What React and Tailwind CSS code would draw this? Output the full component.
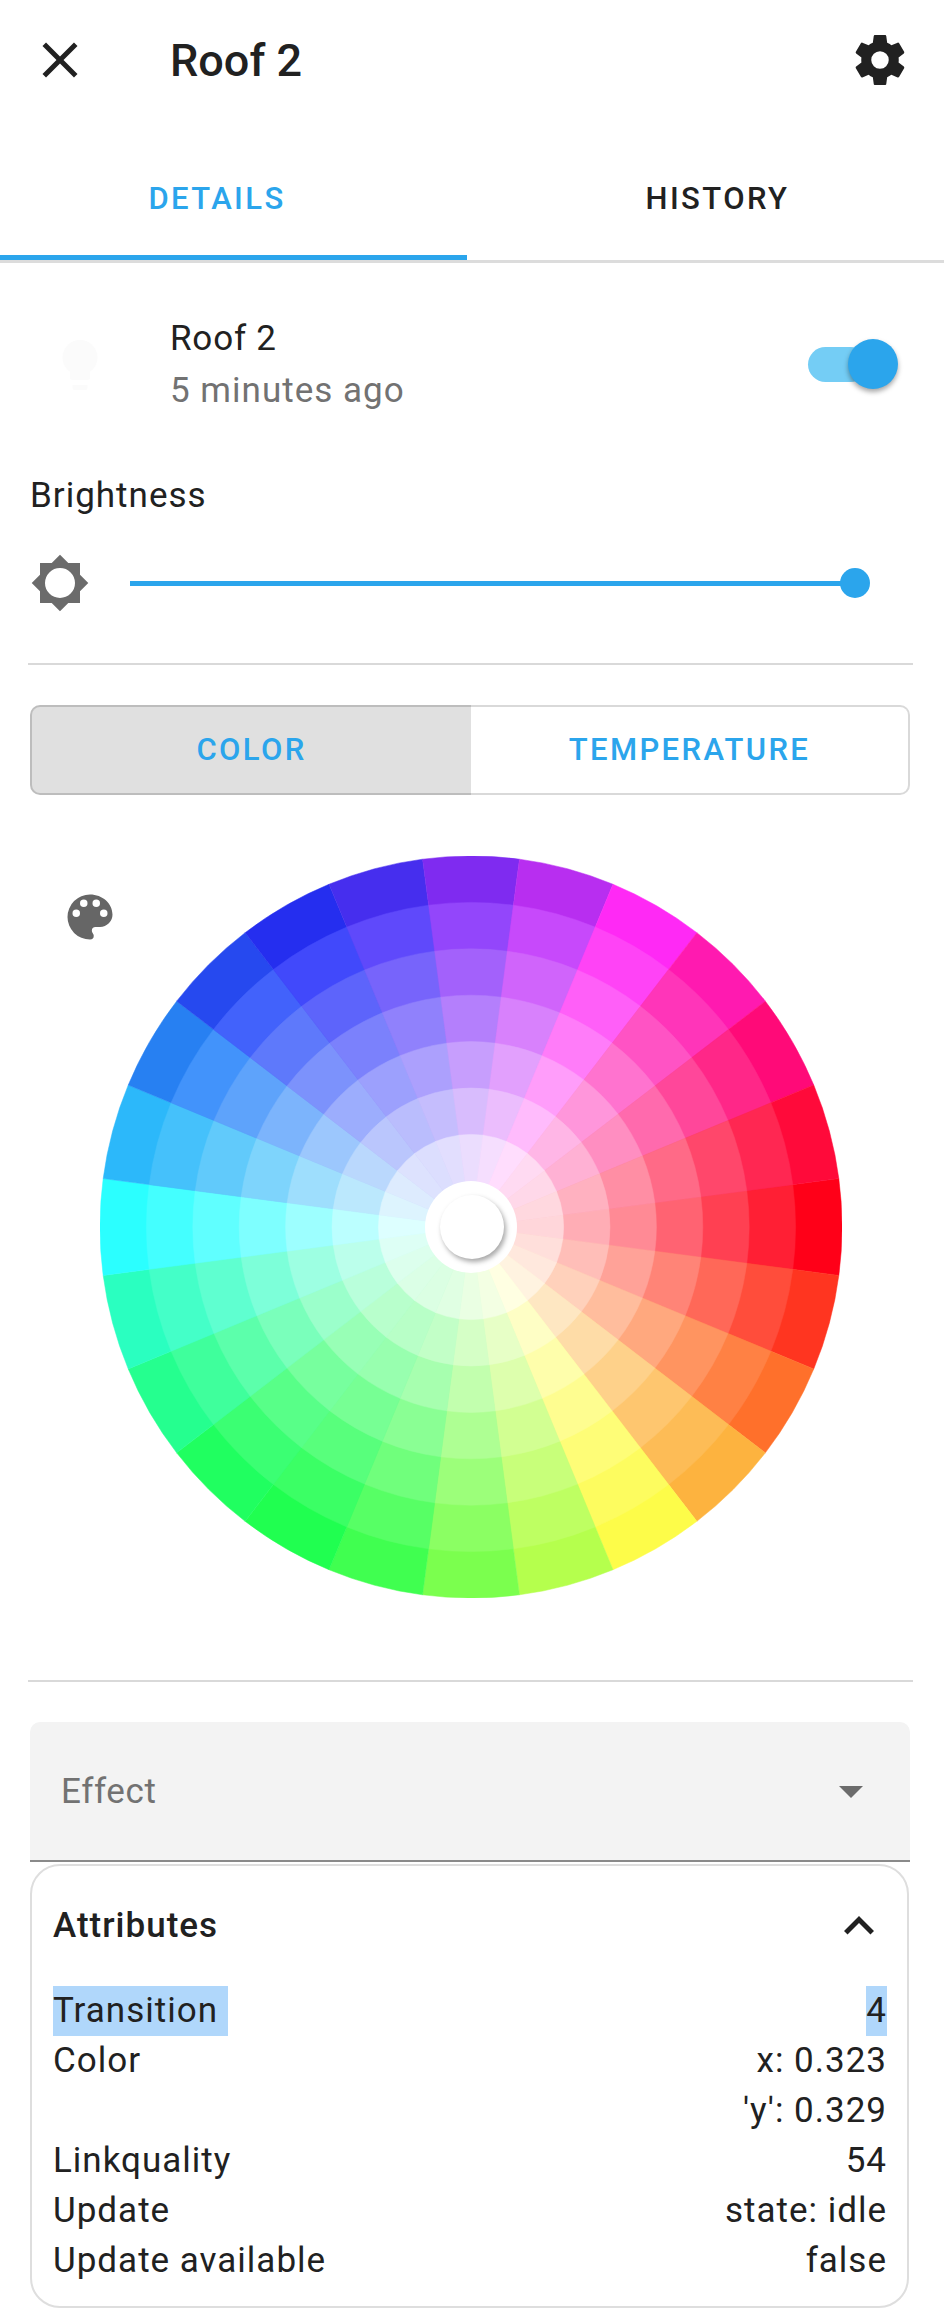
import React from 'react'

const ICONS = {
  close: 'M19,6.41L17.59,5L12,10.59L6.41,5L5,6.41L10.59,12L5,17.59L6.41,19L12,13.41L17.59,19L19,17.59L13.41,12L19,6.41Z',
  cog: 'M12,15.5A3.5,3.5 0 0,1 8.5,12A3.5,3.5 0 0,1 12,8.5A3.5,3.5 0 0,1 15.5,12A3.5,3.5 0 0,1 12,15.5M19.43,12.97C19.47,12.65 19.5,12.33 19.5,12C19.5,11.67 19.47,11.34 19.43,11L21.54,9.37C21.73,9.22 21.78,8.95 21.66,8.73L19.66,5.27C19.54,5.05 19.27,4.96 19.05,5.05L16.56,6.05C16.04,5.66 15.5,5.32 14.87,5.07L14.5,2.42C14.46,2.18 14.25,2 14,2H10C9.75,2 9.54,2.18 9.5,2.42L9.13,5.07C8.5,5.32 7.96,5.66 7.44,6.05L4.95,5.05C4.73,4.96 4.46,5.05 4.34,5.27L2.34,8.73C2.21,8.95 2.27,9.22 2.46,9.37L4.57,11C4.53,11.34 4.5,11.67 4.5,12C4.5,12.33 4.53,12.65 4.57,12.97L2.46,14.63C2.27,14.78 2.21,15.05 2.34,15.27L4.34,18.73C4.46,18.95 4.73,19.03 4.95,18.95L7.44,17.94C7.96,18.34 8.5,18.68 9.13,18.93L9.5,21.58C9.54,21.82 9.75,22 10,22H14C14.25,22 14.46,21.82 14.5,21.58L14.87,18.93C15.5,18.67 16.04,18.34 16.56,17.94L19.05,18.95C19.27,19.03 19.54,18.95 19.66,18.73L21.66,15.27C21.78,15.05 21.73,14.78 21.54,14.63L19.43,12.97Z',
  bulb: 'M12,2A7,7 0 0,0 5,9C5,11.38 6.19,13.47 8,14.74V17A1,1 0 0,0 9,18H15A1,1 0 0,0 16,17V14.74C17.81,13.47 19,11.38 19,9A7,7 0 0,0 12,2M9,21A1,1 0 0,0 10,22H14A1,1 0 0,0 15,21V20H9V21Z',
  sun: 'M12,18A6,6 0 0,1 6,12A6,6 0 0,1 12,6A6,6 0 0,1 18,12A6,6 0 0,1 12,18M20,15.31L23.31,12L20,8.69V4H15.31L12,0.69L8.69,4H4V8.69L0.69,12L4,15.31V20H8.69L12,23.31L15.31,20H20V15.31Z',
  palette: 'M17.5,12A1.5,1.5 0 0,1 16,10.5A1.5,1.5 0 0,1 17.5,9A1.5,1.5 0 0,1 19,10.5A1.5,1.5 0 0,1 17.5,12M14.5,8A1.5,1.5 0 0,1 13,6.5A1.5,1.5 0 0,1 14.5,5A1.5,1.5 0 0,1 16,6.5A1.5,1.5 0 0,1 14.5,8M9.5,8A1.5,1.5 0 0,1 8,6.5A1.5,1.5 0 0,1 9.5,5A1.5,1.5 0 0,1 11,6.5A1.5,1.5 0 0,1 9.5,8M6.5,12A1.5,1.5 0 0,1 5,10.5A1.5,1.5 0 0,1 6.5,9A1.5,1.5 0 0,1 8,10.5A1.5,1.5 0 0,1 6.5,12M12,3A9,9 0 0,0 3,12A9,9 0 0,0 12,21A1.5,1.5 0 0,0 13.5,19.5C13.5,19.11 13.35,18.76 13.11,18.5C12.88,18.23 12.73,17.88 12.73,17.5A1.5,1.5 0 0,1 14.23,16H16A5,5 0 0,0 21,11C21,6.58 16.97,3 12,3Z',
  chevronUp: 'M7.41,15.41L12,10.83L16.59,15.41L18,14L12,8L6,14L7.41,15.41Z',
}

const Icon = ({ path, className }) => (
  <svg viewBox="0 0 24 24" className={className} fill="currentColor" fillRule="evenodd">
    <path d={path} />
  </svg>
)

// outer ring colours, clockwise from 3 o'clock, 15 degrees each
const SECTORS = [
  [255, 0, 24], [255, 53, 32], [255, 112, 43], [253, 179, 63], [253, 252, 73], [181, 255, 77],
  [123, 255, 78], [64, 255, 80], [32, 255, 80], [32, 255, 96], [37, 255, 143], [42, 255, 192],
  [43, 255, 255], [44, 184, 250], [39, 128, 242], [38, 73, 239], [37, 46, 239], [70, 46, 238],
  [127, 43, 240], [184, 46, 240], [255, 41, 245], [255, 26, 176], [255, 10, 120], [255, 10, 58],
]
const RING_MIX = [0, 0.12, 0.25, 0.39, 0.54, 0.68, 0.84]
const CENTER = 371
const RING_WIDTH = 46.4

const wedge = (r, from, to) => {
  const a = (from * Math.PI) / 180
  const b = (to * Math.PI) / 180
  const x1 = CENTER + r * Math.cos(a)
  const y1 = CENTER + r * Math.sin(a)
  const x2 = CENTER + r * Math.cos(b)
  const y2 = CENTER + r * Math.sin(b)
  return `M${CENTER},${CENTER}L${x1},${y1}A${r},${r} 0 0,1 ${x2},${y2}Z`
}

// inner rings are a bit brighter than the outer one, so lift them before adding white
const ringColor = (rgb, ring) => {
  const top = Math.max(...rgb)
  const lift = ring === 0 ? 1 : 250 / Math.min(top, 250)
  const t = RING_MIX[ring]
  const [r, g, b] = rgb.map((v) => {
    const lifted = Math.min(255, v * lift)
    return Math.round(lifted + (255 - lifted) * t)
  })
  return `rgb(${r},${g},${b})`
}

const ColorWheel = () => (
  <svg viewBox="0 0 742 742" className="w-[742px] h-[742px]">
    {RING_MIX.map((_, ring) =>
      SECTORS.map((rgb, i) => {
        const color = ringColor(rgb, ring)
        return (
          <path
            key={`${ring}-${i}`}
            d={wedge(CENTER - RING_WIDTH * ring, i * 15 - 7.5, i * 15 + 7.5)}
            fill={color}
            stroke={color}
            strokeWidth="0.5"
          />
        )
      })
    )}
    <circle cx={CENTER} cy={CENTER} r="46" fill="#ffffff" />
  </svg>
)

const ATTRIBUTES = [
  ['Color', 'x: 0.323'],
  ['', "'y': 0.329"],
  ['Linkquality', '54'],
  ['Update', 'state: idle'],
  ['Update available', 'false'],
]

export default function App() {
  return (
    <div className="w-[944px] h-[2320px] bg-white overflow-hidden text-[#212121] font-['Roboto',sans-serif]">
      {/* top bar */}
      <div className="h-[120px] flex items-center pl-[30px] pr-[34px]">
        <Icon path={ICONS.close} className="w-[60px] h-[60px]" />
        <div className="ml-[80px] flex-1 text-[45px] font-medium leading-none">Roof 2</div>
        <Icon path={ICONS.cog} className="w-[60px] h-[60px]" />
      </div>

      {/* tabs */}
      <div className="flex h-[140px]">
        <div className="w-[467px] border-b-[5px] border-[#2ba5ec] pr-[33px] pt-[24px] flex items-center justify-center text-[31px] font-medium tracking-[2.4px] text-[#2ba5ec]">
          DETAILS
        </div>
        <div className="flex-1 pl-[24px] pt-[24px] pb-[5px] flex items-center justify-center text-[31px] font-medium tracking-[2.4px]">
          HISTORY
        </div>
      </div>
      <div className="h-[3px] bg-[#dcdcdc]" />

      {/* entity row */}
      <div className="mt-[37px] h-[130px] flex items-center pr-[46px]">
        <div className="w-[170px] pl-[50px]">
          <Icon path={ICONS.bulb} className="w-[60px] h-[60px] text-[#fbfbfb]" />
        </div>
        <div className="flex-1">
          <div className="text-[35px] leading-[52px] tracking-[0.8px]">Roof 2</div>
          <div className="text-[35px] leading-[52px] tracking-[1px] text-[#727272]">5 minutes ago</div>
        </div>
        <div className="relative w-[90px] h-[35px] mt-[-2px]">
          <div className="w-[60px] h-[35px] rounded-full bg-[#74cdf5]" />
          <div className="absolute left-[40px] top-[-8px] w-[50px] h-[50px] rounded-full bg-[#2ba5ec] shadow-[0_3px_5px_rgba(0,0,0,0.35)]" />
        </div>
      </div>

      {/* brightness */}
      <div className="mt-[46px] ml-[30px] h-[40px] text-[35px] leading-[40px] tracking-[1px]">Brightness</div>
      <div className="mt-[37px] h-[60px] flex items-center pl-[30px]">
        <Icon path={ICONS.sun} className="w-[60px] h-[60px] text-[#6b6b6b]" />
        <div className="relative ml-[40px] w-[725px] h-[5px] bg-[#2ba5ec]">
          <div className="absolute right-[-15px] top-[-13px] w-[30px] h-[30px] rounded-full bg-[#2ba5ec]" />
        </div>
      </div>
      <div className="mt-[50px] ml-[28px] w-[885px] h-[2px] bg-[#d9d9d9]" />

      {/* color / temperature toggle */}
      <div className="mt-[40px] ml-[30px] w-[880px] h-[90px] flex text-[31px] font-medium tracking-[2.4px] text-[#2ba5ec]">
        <div className="w-[441px] flex items-center justify-center bg-[#e0e0e0] border-[2px] border-r-0 border-[#bdbdbd] rounded-l-[10px]">
          COLOR
        </div>
        <div className="flex-1 flex items-center justify-center bg-white border-[2px] border-l-0 border-[#d9d9d9] rounded-r-[10px]">
          TEMPERATURE
        </div>
      </div>

      {/* wheel */}
      <div className="relative pt-[61px] pl-[99.5px]">
        <ColorWheel />
        <Icon path={ICONS.palette} className="absolute left-[60px] top-[92px] w-[60px] h-[60px] text-[#666666]" />
        <div className="absolute left-[440px] top-[400px] w-[64px] h-[64px] rounded-full bg-white shadow-[2px_3px_5px_rgba(0,0,0,0.35)]" />
      </div>
      <div className="mt-[82px] ml-[28px] w-[885px] h-[2px] bg-[#d9d9d9]" />

      {/* effect select */}
      <div className="mt-[40px] ml-[30px] w-[880px] h-[140px] flex items-center justify-between pl-[31px] pr-[47px] bg-[#f3f3f3] rounded-t-[10px] border-b-[2px] border-[#8a8a8a] text-[35px] tracking-[0.6px] text-[#727272]">
        <span className="mt-[3px]">Effect</span>
        <svg viewBox="0 0 24 12" className="w-[24px] h-[12px] mt-[2px]" fill="#6b6b6b">
          <path d="M0,0H24L12,12Z" />
        </svg>
      </div>

      {/* attributes */}
      <div className="mt-[2px] ml-[30px] w-[879px] h-[444px] border-[2px] border-[#dedede] rounded-[30px] pl-[21px] pr-[20px] text-[35px] tracking-[1px]">
        <div className="h-[120px] flex items-center justify-between">
          <span className="font-medium">Attributes</span>
          <Icon path={ICONS.chevronUp} className="w-[60px] h-[60px] mr-[-2px]" />
        </div>
        <div className="flex justify-between h-[50px] leading-[50px]">
          <span className="bg-[#b0d7fb] pr-[10px]">Transition</span>
          <span className="bg-[#b0d7fb]">4</span>
        </div>
        {ATTRIBUTES.map(([name, value]) => (
          <div key={value} className="flex justify-between h-[50px] leading-[50px]">
            <span>{name}</span>
            <span>{value}</span>
          </div>
        ))}
      </div>
    </div>
  )
}
